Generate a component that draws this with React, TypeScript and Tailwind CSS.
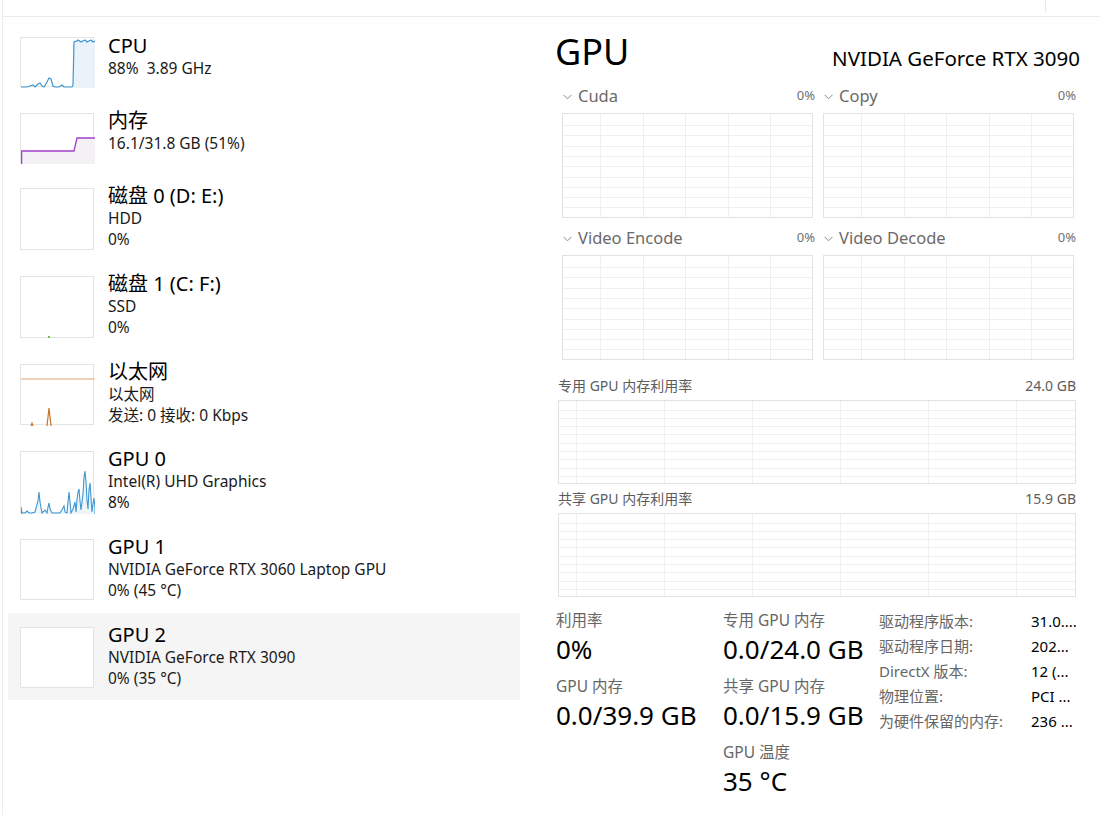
import React from 'react';

const FONT = { fontFamily: '"Noto Sans", "Noto Sans CJK SC", sans-serif' };

type Item = {
  title: string;
  lines: string[];
  h: number;
  thumbH: number;
  thumbTop: number;
  textTop: number;
  spark?: React.ReactNode;
  selected?: boolean;
};

// sparkline drawings, coordinates local to a 74 wide thumbnail
const cpuSpark = (
  <svg width="74" height="50" className="absolute inset-0">
    <rect x="53" y="2" width="21" height="48" fill="#eaf3fa" />
    <polyline
      fill="none"
      stroke="#3d97d1"
      strokeWidth="1.2"
      points="0,49 6,49 9,48 12,47 14,49 17,46 19,45 21,48 23,49 26,44 28,40 30,41 32,48 34,49 38,49 41,47 43,49 48,49 51,49 52,47 53,4 56,3 57,2 60,4 62,3 64,2 66,4 68,3 70,2 72,4 74,3"
    />
  </svg>
);

const memSpark = (
  <svg width="74" height="50" className="absolute inset-0">
    <polygon points="0,50 0,37 53,37 56,24 74,24 74,50" fill="#f4f1f4" />
    <polyline fill="none" stroke="#a040c8" strokeWidth="1.3" points="0.6,50 0.6,37 53,37 56,24 74,24" />
  </svg>
);

const disk1Spark = (
  <svg width="74" height="62" className="absolute inset-0">
    <rect x="27" y="59" width="2" height="2" fill="#7cc040" />
  </svg>
);

const ethSpark = (
  <svg width="74" height="62" className="absolute inset-0">
    <line x1="0" y1="14" x2="74" y2="14" stroke="#e8c2a4" strokeWidth="1.5" />
    <polyline fill="none" stroke="#c8732a" strokeWidth="1.1" points="10,61 11,58 12,61" />
    <polyline fill="none" stroke="#c8732a" strokeWidth="1.2" points="26,61 27,52 28,43 29,52 30,61" />
  </svg>
);

const gpu0Spark = (
  <svg width="74" height="62" className="absolute inset-0">
    <polyline
      fill="#eef5fb"
      stroke="#3d97d1"
      strokeWidth="1.1"
      points="0,62 0,55 1,61 4,61 6,59 8,61 11,61 14,60 17,49 18,40 19,50 21,61 24,58 26,61 27,55 28,51 29,57 31,61 36,61 39,61 42,56 43,54 44,60 46,61 47,50 48,40 49,50 50,61 52,57 54,50 55,60 56,48 57,40 58,37 59,49 60,58 62,42 63,25 64,19 65,30 66,48 67,57 68,38 69,31 70,46 71,60 72,52 73,46 74,56 74,62"
    />
  </svg>
);

const items: Item[] = [
  { title: 'CPU', lines: ['88%  3.89 GHz'], h: 76, thumbH: 50, thumbTop: 14, textTop: 11, spark: cpuSpark },
  { title: '内存', lines: ['16.1/31.8 GB (51%)'], h: 75, thumbH: 50, thumbTop: 14, textTop: 10, spark: memSpark },
  { title: '磁盘 0 (D: E:)', lines: ['HDD', '0%'], h: 88, thumbH: 62, thumbTop: 14, textTop: 10 },
  { title: '磁盘 1 (C: F:)', lines: ['SSD', '0%'], h: 88, thumbH: 62, thumbTop: 14, textTop: 10, spark: disk1Spark },
  { title: '以太网', lines: ['以太网', '发送: 0 接收: 0 Kbps'], h: 87, thumbH: 61, thumbTop: 14, textTop: 10, spark: ethSpark },
  { title: 'GPU 0', lines: ['Intel(R) UHD Graphics', '8%'], h: 88, thumbH: 62, thumbTop: 14, textTop: 10, spark: gpu0Spark },
  { title: 'GPU 1', lines: ['NVIDIA GeForce RTX 3060 Laptop GPU', '0% (45 °C)'], h: 88, thumbH: 61, thumbTop: 14, textTop: 10 },
  { title: 'GPU 2', lines: ['NVIDIA GeForce RTX 3090', '0% (35 °C)'], h: 87, thumbH: 61, thumbTop: 14, textTop: 10, selected: true },
];

function SideItem({ item }: { item: Item }) {
  return (
    <div
      className={`flex gap-[14px] pl-[12px] ${item.selected ? 'bg-[#f5f5f5]' : ''}`}
      style={{ height: item.h }}
    >
      <div
        className="relative w-[74px] shrink-0 border border-[#e4e4e4] bg-white"
        style={{ height: item.thumbH, marginTop: item.thumbTop }}
      >
        {item.spark}
      </div>
      <div style={{ paddingTop: item.textTop }} className="flex flex-col text-[#1a1a1a]">
        <div className="text-[20px] leading-[24px] text-black">{item.title}</div>
        {item.lines.map((l) => (
          <div key={l} className="text-[15.5px] leading-[21px] whitespace-pre">
            {l}
          </div>
        ))}
      </div>
    </div>
  );
}

function Grid({
  w,
  h,
  x0,
  dx,
  y0,
  dy,
}: {
  w: number;
  h: number;
  x0: number;
  dx: number;
  y0: number;
  dy: number;
}) {
  const vs: number[] = [];
  for (let x = x0; x < w - 1; x += dx) vs.push(Math.round(x) + 0.5);
  const hs: number[] = [];
  for (let y = y0; y < h - 1; y += dy) hs.push(Math.round(y) + 0.5);
  return (
    <svg width={w} height={h} className="block">
      <rect x="0.5" y="0.5" width={w - 1} height={h - 1} fill="white" stroke="#e2e2e2" />
      {vs.map((x) => (
        <line key={'v' + x} x1={x} y1="1" x2={x} y2={h - 1} stroke="#efefef" />
      ))}
      {hs.map((y) => (
        <line key={'h' + y} x1="1" y1={y} x2={w - 1} y2={y} stroke="#efefef" />
      ))}
    </svg>
  );
}

function Chevron() {
  return (
    <svg width="9" height="6" viewBox="0 0 9 6" className="mr-[6px] mt-[2px]">
      <polyline points="0.5,0.8 4.5,4.8 8.5,0.8" fill="none" stroke="#8a8a8a" strokeWidth="1" />
    </svg>
  );
}

function Engine({ name }: { name: string }) {
  return (
    <div className="flex w-[253px] flex-col">
      <div className="flex h-[22px] items-center justify-between">
        <div className="flex items-center pl-[1px]">
          <Chevron />
          <span className="text-[16.5px] text-[#6a6a6a]">{name}</span>
        </div>
        <span className="text-[13px] text-[#707070]">0%</span>
      </div>
      <div className="mt-[6px]">
        <Grid w={251} h={105} x0={38} dx={42.6} y0={12} dy={10.3} />
      </div>
    </div>
  );
}

function MemGraph({ label, value }: { label: string; value: string }) {
  return (
    <div className="flex w-[518px] flex-col">
      <div className="flex h-[18px] items-center justify-between text-[14px] text-[#5c5c5c]">
        <span>{label}</span>
        <span>{value}</span>
      </div>
      <div className="mt-[6px]">
        <Grid w={518} h={84} x0={18} dx={88} y0={9.5} dy={8.3} />
      </div>
    </div>
  );
}

function Stat({ label, value }: { label: string; value: string }) {
  return (
    <div className="flex flex-col">
      <div className="h-[22px] text-[15.5px] leading-[22px] text-[#666] whitespace-nowrap">{label}</div>
      <div className="h-[36px] text-[26px] leading-[36px] text-black whitespace-nowrap">{value}</div>
    </div>
  );
}

const props: [string, string][] = [
  ['驱动程序版本:', '31.0....'],
  ['驱动程序日期:', '202...'],
  ['DirectX 版本:', '12 (...'],
  ['物理位置:', 'PCI ...'],
  ['为硬件保留的内存:', '236 ...'],
];

export default function App() {
  return (
    <div className="relative h-[815px] w-[1100px] overflow-hidden bg-white" style={FONT}>
      <div className="ml-[2px] flex h-full flex-col border-l border-[#ececec]">
        {/* top strip */}
        <div className="flex h-[17px] shrink-0 justify-end border-b border-[#ebebeb]">
          <div className="mr-[54px] h-[12px] w-px bg-[#e6e6e6]" />
        </div>

        <div className="flex flex-1">
          {/* left list */}
          <div className="flex w-[517px] shrink-0 flex-col pl-[5px] pt-[6px]">
            {items.map((it) => (
              <SideItem key={it.title} item={it} />
            ))}
          </div>

          {/* right details */}
          <div className="flex flex-1 flex-col pl-[35px] pr-[20px] pt-[15px]">
            <div className="flex h-[40px] items-center justify-between">
              <span className="text-[36px] leading-[40px] text-black">GPU</span>
              <span className="mt-[12px] text-[20.5px] text-black">NVIDIA GeForce RTX 3090</span>
            </div>

            <div className="mt-[13px] grid grid-cols-[253px_253px] gap-x-[8px] gap-y-[9px] pl-[7px]">
              <Engine name="Cuda" />
              <Engine name="Copy" />
              <Engine name="Video Encode" />
              <Engine name="Video Decode" />
            </div>

            <div className="mt-[16px] flex flex-col gap-[5px] pl-[3px]">
              <MemGraph label="专用 GPU 内存利用率" value="24.0 GB" />
              <MemGraph label="共享 GPU 内存利用率" value="15.9 GB" />
            </div>

            <div className="mt-[12px] flex pl-[1px]">
              <div className="flex w-[167px] shrink-0 flex-col gap-[8px]">
                <Stat label="利用率" value="0%" />
                <Stat label="GPU 内存" value="0.0/39.9 GB" />
              </div>
              <div className="flex w-[156px] shrink-0 flex-col gap-[8px]">
                <Stat label="专用 GPU 内存" value="0.0/24.0 GB" />
                <Stat label="共享 GPU 内存" value="0.0/15.9 GB" />
                <Stat label="GPU 温度" value="35 °C" />
              </div>
              <div className="flex flex-col">
                {props.map(([k, v]) => (
                  <div key={k} className="flex h-[25px] items-center text-[15px] whitespace-nowrap">
                    <span className="w-[152px] shrink-0 text-[#666]">{k}</span>
                    <span className="text-black">{v}</span>
                  </div>
                ))}
              </div>
            </div>
          </div>
        </div>
      </div>
    </div>
  );
}
